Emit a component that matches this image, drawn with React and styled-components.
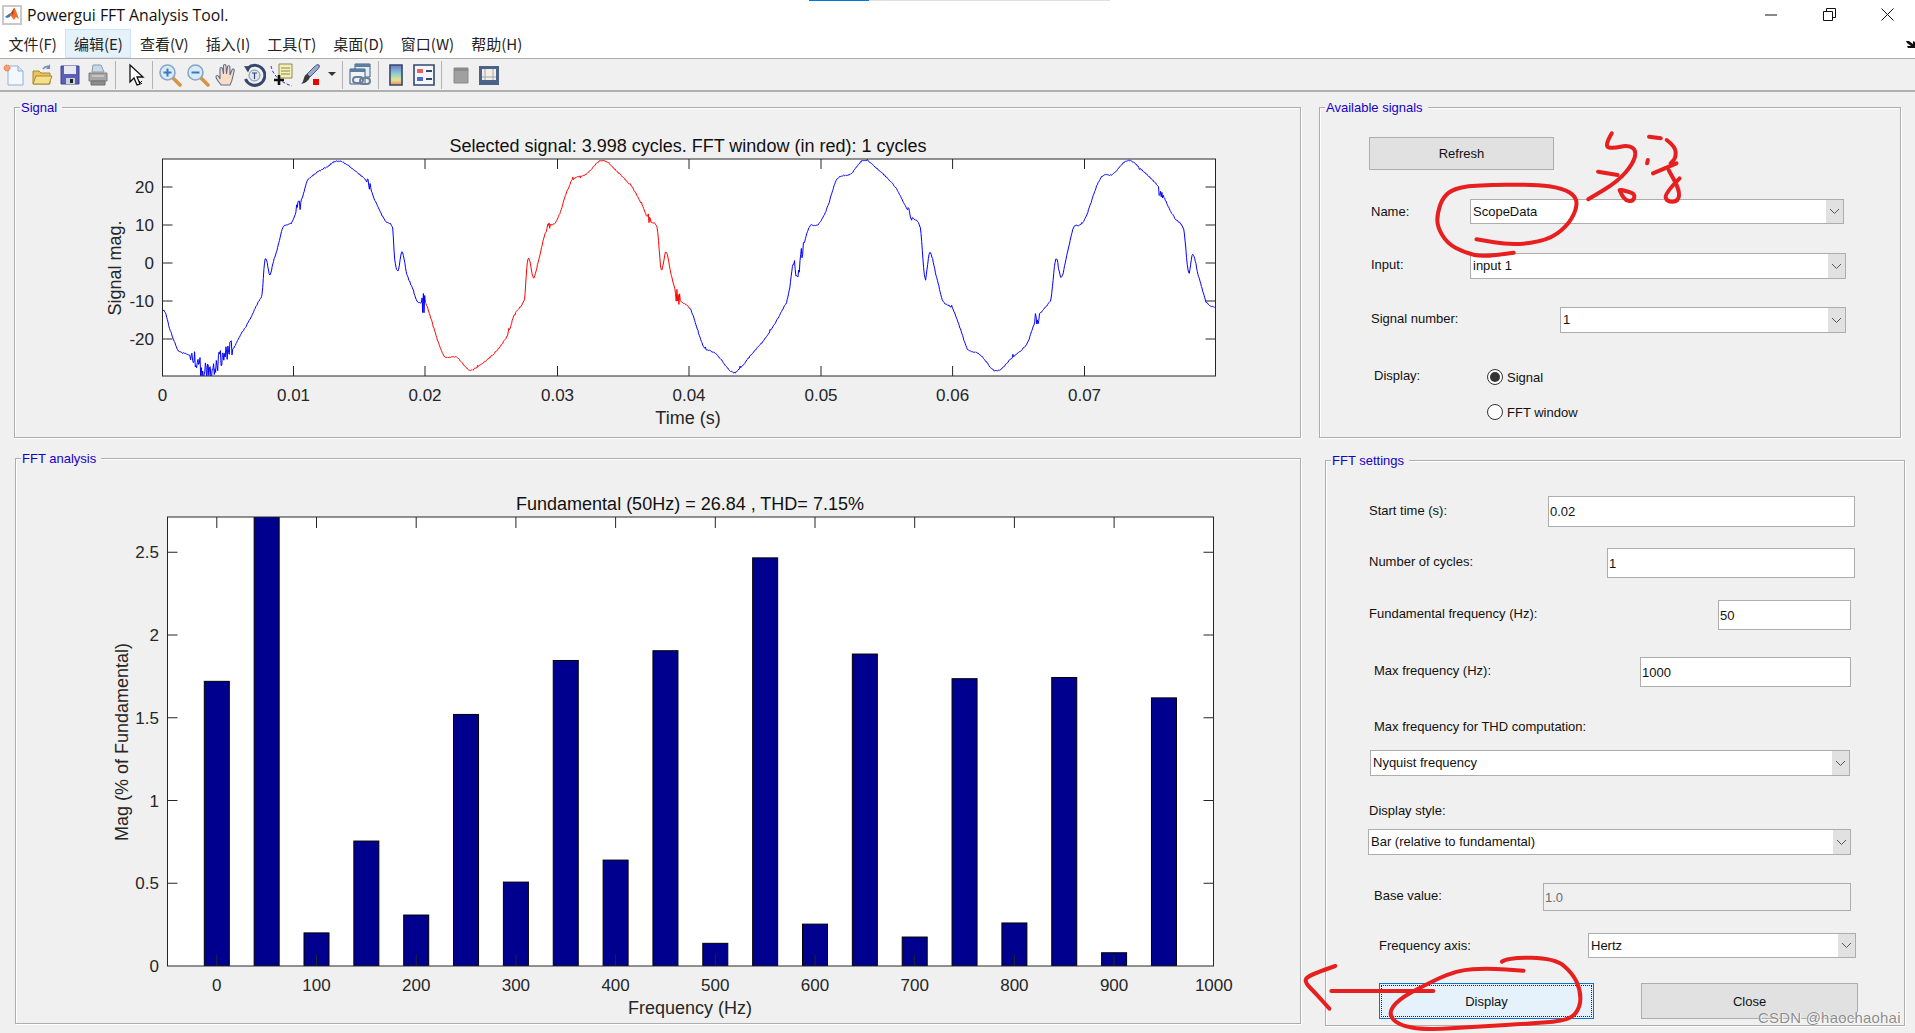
import React from "react";
import styled, { createGlobalStyle } from "styled-components";

const Global = createGlobalStyle`
  html, body { margin: 0; padding: 0; background: #f0f0f0; }
  * { box-sizing: border-box; }
`;
const UI = `"Liberation Sans", Arial, sans-serif`;

const Window = styled.div`
  position: relative; width: 1915px; height: 1033px; overflow: hidden;
  background: #f0f0f0; font-family: ${UI}; display: flex; flex-direction: column;
`;
const ProgressTrack = styled.div`
  position: absolute; left: 809px; top: 0; width: 301px; height: 1px; background: #e0e0e0;
`;
const ProgressFill = styled.div`
  width: 60px; height: 100%; background: #0078d7;
`;
const TitleBar = styled.div`
  height: 29px; background: #fff; display: flex; align-items: center; padding-left: 2px; flex: none;
`;
const TitleText = styled.div`
  margin-left: 5px; font: 15.8px "Open Sans", sans-serif; color: #111; flex: 1;
`;
const WinButton = styled.div`
  width: 58px; height: 27px; display: flex; align-items: center; justify-content: center;
  &:last-child { margin-right: -1px; }
`;
const MenuBar = styled.div`
  height: 30px; background: #fff; border-bottom: 1px solid #acacac; display: flex; flex: none;
  align-items: stretch;
`;
const MenuItem = styled.div`
  padding: 0 8.5px; display: flex; align-items: center; justify-content: center; white-space: nowrap;
  font: 15px "Noto Sans CJK SC", sans-serif; color: #222;
  flex: none; height: 29px;
  ${p => p.$active && `background: #e5f1fb; outline: 1px solid #cde4f7; outline-offset: -1px;`}
`;
const Corner = styled.div`
  margin-left: auto; align-self: center; display: flex; margin-right: -1px;
`;
const ToolBar = styled.div`
  height: 33px; background: #f0f0f0; border-bottom: 2px solid #b0b0b0; display: flex; flex: none;
  align-items: center;
`;
const Tool = styled.div`
  width: 28px; height: 28px; display: flex; align-items: center; justify-content: center; flex: none;
`;
const ToolSep = styled.div`
  width: 1px; height: 28px; background: #b4b4b4; flex: none;
  margin: 0 ${p => p.$r}px 0 ${p => p.$l}px;
`;
const CaretWrap = styled.div`
  margin-left: 4px; display: flex; flex: none;
`;
const Work = styled.div`
  display: flex; padding: 15px 0 0 14px; flex: 1; align-items: flex-start;
`;
const Column = styled.div`
  display: flex; flex-direction: column; flex: none;
  margin-left: ${p => p.$ml || 0}px; width: ${p => p.$w}px;
`;
const Panel = styled.div`
  position: relative; flex: none;
  width: ${p => p.$w}px; height: ${p => p.$h}px;
  margin-top: ${p => p.$mt || 0}px; margin-left: ${p => p.$ml || 0}px;
  border: 1px solid #adadad; box-shadow: inset 1px 1px 0 #fff, 1px 1px 0 #fff;
  padding: ${p => p.$pad || "0"};
`;
const Legend = styled.div`
  position: absolute; left: 5px; top: -8px; padding: 0 5px 0 1px; background: #f0f0f0; height: 16px;
  font-size: 13px; line-height: 15px; color: #1400c8; white-space: nowrap;
`;
const ChartSvg = styled.svg`
  display: block;
  text { font-family: ${UI}; fill: #262626; }
`;
const Row = styled.div`
  display: flex; align-items: center; margin-top: ${p => p.$mt || 0}px; height: ${p => p.$h}px;
`;
const Label = styled.div`
  width: ${p => p.$w}px; padding-left: ${p => p.$in || 0}px; padding-bottom: ${p => p.$pb ?? 3}px;
  font-size: 13px; color: #111; white-space: nowrap; flex: none;
`;
const PushButton = styled.div`
  width: ${p => p.$w}px; height: ${p => p.$h}px; margin-left: ${p => p.$ml || 0}px; flex: none;
  background: #e1e1e1; border: 1px solid #adadad; display: flex; align-items: center; justify-content: center;
  font-size: 13px; color: #111;
`;
const FocusButton = styled(PushButton)`
  background: #e5f1fb; border: 1px solid #0078d7; outline: 1px dotted #222; outline-offset: -3px;
`;
const SelectBox = styled.div`
  width: ${p => p.$w}px; height: 100%; flex: none; background: #fff; border: 1px solid #adadad;
  margin-left: ${p => p.$ml || 0}px;
  display: flex; align-items: stretch; font-size: 13px; color: #111;
`;
const SelectText = styled.div`
  flex: 1; padding-left: 2px; line-height: 24px; white-space: nowrap;
`;
const SelectArrow = styled.div`
  width: 17px; background: #e1e1e1; display: flex; align-items: center; justify-content: center;
`;
const TextBox = styled.div`
  width: ${p => p.$w}px; height: 100%; flex: none; border: 1px solid #adadad; padding-left: 1px;
  background: ${p => (p.$disabled ? "#f0f0f0" : "#fff")};
  color: ${p => (p.$disabled ? "#6d6d6d" : "#111")};
  font-size: 13px; display: flex; align-items: center;
`;
const Radio = styled.div`
  width: 16px; height: 16px; border-radius: 50%; border: 1px solid #333; background: #fff; flex: none;
  display: flex; align-items: center; justify-content: center;
  &::after { content: ""; width: 10px; height: 10px; border-radius: 50%; background: ${p => (p.$on ? "#333" : "transparent")}; }
`;
const RadioText = styled.div`
  margin-left: 4px; font-size: 13px; color: #111;
`;
const Watermark = styled.div`
  position: absolute; left: 1758px; top: 1009px; font-size: 15px; line-height: 17px;
  color: #8c8c8c; text-shadow: 0 0 1px #fff, 1px 0 0 #fff; white-space: nowrap; letter-spacing: 0.2px;
`;
const Ink = styled.svg`
  position: absolute; left: 0; top: 0; pointer-events: none;
`;

/* ------- data ------- */
const z4 = [[153,538],[160,545],[170,590],[182,630],[192,660],[210,668],[222,675],[240,700],[260,725],[285,700],[310,665],[325,655],[345,610],[365,570],[390,510],[397,490],[403,395],[408,388],[416,432],[425,390],[435,350],[448,288],[470,275],[485,230],[497,195],[507,150],[530,125],[560,105],[578,90],[600,97],[630,125],[655,155],[680,225],[700,270],[717,290],[722,385],[730,420],[740,362],[752,430],[765,470],[778,513],[797,515],[810,560],[825,620],[843,675],[875,680],[905,717],[945,690],[975,655],[1000,610],[1015,550],[1040,505],[1047,395],[1052,388],[1062,440],[1075,385],[1090,310],[1100,285],[1120,265],[1150,165],[1165,140],[1190,130],[1230,88],[1270,125],[1305,170],[1330,225],[1345,270],[1365,290],[1375,415],[1387,362],[1400,435],[1415,500],[1440,525],[1450,545],[1465,600],[1480,650],[1510,670]];
const z5 = [[78,722],[95,715],[130,665],[155,630],[185,575],[212,515],[220,470],[228,400],[240,430],[250,360],[268,288],[290,280],[310,235],[335,145],[370,128],[400,88],[430,110],[480,170],[515,250],[540,290],[551,440],[563,365],[580,440],[595,510],[620,535],[640,600],[655,655],[685,670],[725,720],[765,680],[800,640],[825,560],[860,505],[870,395],[875,388],[885,440],[900,365],[915,290],[940,270],[980,145],[1010,130],[1048,88],[1080,115],[1125,170],[1160,255],[1185,295],[1197,425],[1207,370],[1220,430],[1240,510],[1263,530]];
const knots = [
  ...z4.map(([x, y]) => [100 + x / 2.45, 130 + y / 3]),
  ...z5.map(([x, y]) => [700 + x / 2.45, 130 + y / 3]),
];
const noiseZones = [[190.6,232.6,10],[296,301,7],[367,371,7],[422,425,12],[508,510,6],[547,551,6],[647,651,8],[675.5,680,7],[794,804,10],[908,912,7],[1034.7,1038.8,8],[1159,1163,8]];
let seed = 12345;
const rnd = () => ((seed = (seed * 16807) % 2147483647) / 2147483647);
const catmull = (a, b, c, d, t) =>
  0.5 * (2 * b + (c - a) * t + (2 * a - 5 * b + 4 * c - d) * t * t + (3 * b - a - 3 * c + d) * t * t * t);
const wave = (() => {
  const pts = [];
  for (let i = 0; i < knots.length - 1; i++) {
    const p0 = knots[Math.max(0, i - 1)], p1 = knots[i], p2 = knots[i + 1], p3 = knots[Math.min(knots.length - 1, i + 2)];
    const n = Math.max(1, Math.ceil((p2[0] - p1[0]) / 0.7));
    for (let k = 0; k < n; k++) {
      const t = k / n;
      const x = p1[0] + (p2[0] - p1[0]) * t;
      let y = catmull(p0[1], p1[1], p2[1], p3[1], t) + (rnd() - 0.5) * 1.2;
      if (rnd() < 0.03) y += (rnd() - 0.5) * 5;
      const z = noiseZones.find(a => x >= a[0] && x <= a[1]);
      if (z) y += (rnd() - 0.5) * 2 * z[2];
      pts.push([x, y]);
    }
  }
  return pts;
})();
const toLine = pts => pts.map(p => `${p[0].toFixed(1)},${p[1].toFixed(1)}`).join(" ");
const RED0 = 425, RED1 = 689;
const waveA = toLine(wave.filter(p => p[0] <= RED0 + 0.5));
const waveR = toLine(wave.filter(p => p[0] >= RED0 && p[0] <= RED1 + 0.5));
const waveB = toLine(wave.filter(p => p[0] >= RED1));

const bars = [1.72,2.9,0.2,0.755,0.308,1.52,0.507,1.846,0.64,1.905,0.137,2.466,0.253,1.885,0.175,1.736,0.26,1.743,0.08,1.62];

/* ------- charts ------- */
function SignalChart() {
  const L = 162.5, R = 1215.5, T = 158, B = 375;
  const xt = [[162.5,"0"],[293.5,"0.01"],[425,"0.02"],[557.5,"0.03"],[689,"0.04"],[821,"0.05"],[952.6,"0.06"],[1084.5,"0.07"]];
  const yt = [[186,"20"],[224,"10"],[262,"0"],[300,"-10"],[338,"-20"]];
  return (
    <ChartSvg width="1285" height="329" viewBox="15 107 1285 329">
      <defs><clipPath id="sigclip"><rect x={L} y={T} width={R - L} height={B - T} /></clipPath></defs>
      <rect x={L} y={T} width={R - L} height={B - T} fill="#fff" />
      <g clipPath="url(#sigclip)" fill="none" strokeWidth="1">
        <polyline points={waveA} stroke="#0000ff" />
        <polyline points={waveR} stroke="#ff0000" />
        <polyline points={waveB} stroke="#0000ff" />
      </g>
      <rect x={L} y={T} width={R - L} height={B - T} fill="none" stroke="#262626" />
      {xt.slice(1).map(([x]) => <path key={x} d={`M${x} ${T}v10M${x} ${B}v-10`} stroke="#262626" fill="none" />)}
      {yt.map(([y]) => <path key={y} d={`M${L} ${y}h10M${R} ${y}h-10`} stroke="#262626" fill="none" />)}
      {xt.map(([x, s]) => <text key={s} x={x} y="400" fontSize="17" textAnchor="middle">{s}</text>)}
      {yt.map(([y, s]) => <text key={s} x="154" y={y + 6} fontSize="17" textAnchor="end">{s}</text>)}
      <text x="688" y="151" fontSize="18" textAnchor="middle" style={{ fill: "#111" }}>Selected signal: 3.998 cycles. FFT window (in red): 1 cycles</text>
      <text x="688" y="423" fontSize="18" textAnchor="middle">Time (s)</text>
      <text transform="translate(121 267) rotate(-90)" fontSize="18" textAnchor="middle">Signal mag.</text>
    </ChartSvg>
  );
}
function FftChart() {
  const L = 167.5, R = 1213.5, T = 516, B = 965;
  const fx = f => 216.8 + f * 0.997;
  const vy = v => 965 - v * 165.5;
  const ys = [[0,"0"],[0.5,"0.5"],[1,"1"],[1.5,"1.5"],[2,"2"],[2.5,"2.5"]];
  const xs = [0,100,200,300,400,500,600,700,800,900,1000];
  return (
    <ChartSvg width="1285" height="564" viewBox="16 458 1285 564">
      <defs><clipPath id="fftclip"><rect x={L} y={T} width={R - L} height={B - T} /></clipPath></defs>
      <rect x={L} y={T} width={R - L} height={B - T} fill="#fff" />
      <g clipPath="url(#fftclip)">
        {bars.map((v, i) => (
          <rect key={i} x={fx(i * 50) - 12.5} y={vy(v)} width="25" height={B - vy(v)} fill="#00008f" stroke="#000" strokeWidth="1" />
        ))}
      </g>
      <rect x={L} y={T} width={R - L} height={B - T} fill="none" stroke="#262626" />
      {xs.slice(0, -1).map(f => <path key={f} d={`M${fx(f)} ${T}v11M${fx(f)} ${B}v-11`} stroke="#262626" fill="none" />)}
      {ys.slice(1).map(([v]) => <path key={v} d={`M${L} ${vy(v)}h10M${R} ${vy(v)}h-10`} stroke="#262626" fill="none" />)}
      {xs.map(f => <text key={f} x={fx(f)} y="990" fontSize="17" textAnchor="middle">{f}</text>)}
      {ys.map(([v, s]) => <text key={s} x="159" y={vy(v) + 6} fontSize="17" textAnchor="end">{s}</text>)}
      <text x="690" y="509" fontSize="18" textAnchor="middle" style={{ fill: "#111" }}>Fundamental (50Hz) = 26.84 , THD= 7.15%</text>
      <text x="690" y="1013" fontSize="18" textAnchor="middle">Frequency (Hz)</text>
      <text transform="translate(128 741) rotate(-90)" fontSize="18" textAnchor="middle">Mag (% of Fundamental)</text>
    </ChartSvg>
  );
}

/* ------- toolbar icons ------- */
const I = ({ children }) => <svg width="24" height="24" viewBox="0 0 24 24">{children}</svg>;
const NewIcon = () => <I><path d="M6 3h10l5 5v14H6z" fill="#f4f8fe" stroke="#8fb0d8" /><path d="M16 3v5h5" fill="#d6e4f5" stroke="#8fb0d8" /><circle cx="5" cy="5" r="3" fill="#f4a070" stroke="#e07040" strokeDasharray="1.5 1" /></I>;
const OpenIcon = () => <I><path d="M3 8h6l2 2h9v11H3z" fill="#e8c45a" stroke="#a88a30" /><path d="M3 21l3-8h16l-3 8z" fill="#f6e08c" stroke="#a88a30" /><path d="M13 6q3-4 7-2" fill="none" stroke="#6f8fb8" strokeWidth="1.6" /><path d="M20 1v5h-4z" fill="#6f8fb8" /></I>;
const SaveIcon = () => <I><path d="M3 3h18v18H3z" fill="#5a5fb5" stroke="#3f4390" /><path d="M6 3h12v8H6z" fill="#e8e8f4" /><path d="M8 15h9v6H8z" fill="#cfd0de" /><path d="M12 16h3v4h-3z" fill="#222" /></I>;
const PrintIcon = () => <I><path d="M7 2h8l3 7H6z" fill="#c6dbea" stroke="#8c9aa3" /><path d="M3 10h18v8H3z" fill="#a6a6a6" stroke="#7c7c7c" /><path d="M5 18h14v4H5z" fill="#8c8c8c" stroke="#707070" /><path d="M6 13h12" stroke="#e2e2e2" /></I>;
const PointerIcon = () => <I><path d="M6 2v17l4-4 3 7 3-1-3-7h6z" fill="#fff" stroke="#111" strokeWidth="1.3" /><path d="M15 18l3 3m0-3l-3 3" stroke="#111" /></I>;
const ZoomIcon = ({ plus }) => <I><path d="M14 14l8 8" stroke="#d99440" strokeWidth="3.6" strokeLinecap="round" /><circle cx="9.5" cy="9.5" r="7.5" fill="#d7ebf8" stroke="#88a6c4" strokeWidth="1.6" /><path d={plus ? "M5.5 9.5h8M9.5 5.5v8" : "M5.5 9.5h8"} stroke="#3d78b8" strokeWidth="2" /></I>;
const HandIcon = () => <I><path d="M7 22c-2-3-5-6-5-8s2-2 3 0l1 2V6c0-2 2-2 2.5 0l1 5V3c0-2 2.5-2 2.5 0l.5 8 1-7c.3-2 2.6-1.6 2.4.4L16 12l2-5c.7-1.6 2.6-1 2.2.7L18.5 15c-.5 3-1.5 5-2.5 7z" fill="#fbdcc4" stroke="#5d6f95" strokeWidth="1.1" /></I>;
const RotateIcon = () => <I><path d="M6 5A10 10 0 1 1 3.5 16" fill="none" stroke="#34476e" strokeWidth="3" /><path d="M2 3l7 .5-3 6z" fill="#34476e" /><circle cx="12.5" cy="12.5" r="5.5" fill="#dfe6ee" stroke="#7a8aa5" /><path d="M10 10h5M12.5 10v6" stroke="#34476e" strokeWidth="1.2" /></I>;
const CursorIcon = () => <I><path d="M9 1h13v14H9z" fill="#f5efb8" stroke="#8c8a50" /><path d="M11 5h9M11 8h9M11 11h9" stroke="#8c8a50" /><path d="M1 3q3 14 21 20" fill="none" stroke="#2222dd" strokeDasharray="3 2" /><path d="M9 12v10M4 17h10" stroke="#111" strokeWidth="2.6" /></I>;
const BrushIcon = () => <I><path d="M21 2c1 1 0 3-2 5l-7 7-3-3 7-7c2-2 4-3 5-2z" fill="#9aa9cf" stroke="#4a5a88" /><path d="M9 11l3 3c-1 3-4 6-9 7 2-2 2-3 3-6 .5-2 1.500-3.500 3-4z" fill="#3a3a3a" /><path d="M15 16h6v6h-6z" fill="#ee0000" /></I>;
const LinkIcon = () => <I><path d="M7 1h15v13H7z" fill="#e4ecf4" stroke="#3f5c80" /><path d="M7 1h15v3H7z" fill="#5c7ca0" /><path d="M2 6h15v15H2z" fill="#eef3f8" stroke="#3f5c80" /><path d="M2 6h15v3H2z" fill="#5c7ca0" /><rect x="5" y="14" width="10" height="6" rx="3" fill="none" stroke="#6a7f9a" strokeWidth="2" /><rect x="12" y="15" width="10" height="6" rx="3" fill="none" stroke="#6a7f9a" strokeWidth="2" /></I>;
const ColorbarIcon = () => <I><defs><linearGradient id="cb" x1="0" y1="0" x2="0" y2="1"><stop offset="0" stopColor="#6a78c8" /><stop offset="0.45" stopColor="#8fd0d0" /><stop offset="0.75" stopColor="#ecdf90" /><stop offset="1" stopColor="#e88a60" /></linearGradient></defs><path d="M6 2h12v20H6z" fill="url(#cb)" stroke="#34476e" strokeWidth="1.6" /></I>;
const LegendIcon = () => <I><path d="M2 2h20v20H2z" fill="#f4f6fa" stroke="#34476e" strokeWidth="1.6" /><path d="M5 6h6v4H5z" fill="#e86060" /><path d="M5 14h6v4H5z" fill="#5068d0" /><path d="M14 8h6M14 16h6" stroke="#34476e" strokeWidth="1.8" /></I>;
const HideIcon = () => <I><path d="M5 5h14v15H5z" fill="#a0a0a0" stroke="#8a8a8a" /><path d="M5 5h14v3H5z" fill="#8a8a8a" /></I>;
const PlotIcon = () => <I><path d="M2 3h20v19H2z" fill="#4c6288" /><path d="M5 6h14v11H5z" fill="#f4efe0" /><path d="M8 6v11M16 6v11M5 14h14" stroke="#9aa6ba" /></I>;
const Caret = () => <svg width="8" height="5" viewBox="0 0 8 5"><path d="M0 0h8L4 4z" fill="#333" /></svg>;
const Chevron = () => <svg width="11" height="7" viewBox="0 0 11 7"><path d="M1 1l4.500 4.500L10 1" fill="none" stroke="#555" /></svg>;

/* ------- hand-drawn annotation ------- */
const smooth = pts => {
  if (pts.length < 3) return `M${pts[0][0]} ${pts[0][1]}L${pts[1][0]} ${pts[1][1]}`;
  let d = `M${pts[0][0].toFixed(1)} ${pts[0][1].toFixed(1)}`;
  for (let i = 1; i < pts.length - 1; i++) {
    const mx = (pts[i][0] + pts[i + 1][0]) / 2, my = (pts[i][1] + pts[i + 1][1]) / 2;
    d += `Q${pts[i][0].toFixed(1)} ${pts[i][1].toFixed(1)} ${mx.toFixed(1)} ${my.toFixed(1)}`;
  }
  const l = pts[pts.length - 1];
  return d + `L${l[0].toFixed(1)} ${l[1].toFixed(1)}`;
};
const top = a => a.map(([x, y]) => [1300 + x / 2.55, y / 3]);
const low = a => a.map(([x, y]) => [1300 + x / 2.55, 850 + y / 3]);
const inkStrokes = [
  top([[545,758],[470,772],[420,758],[375,730],[350,680],[350,640],[365,590],[395,565],[450,555],[600,553],[670,565],[705,590],[705,630],[680,680],[630,722],[540,736],[450,718]]),
  top([[795,400],[775,440],[800,445],[835,435],[858,450],[850,490],[810,545],[735,598]]),
  top([[760,515],[810,525]]),
  top([[815,570],[825,600],[850,605],[855,580],[820,570]]),
  top([[890,410],[920,415]]),
  top([[935,420],[958,440],[958,475],[945,490]]),
  top([[885,490],[887,480]]),
  top([[900,520],[960,490]]),
  top([[968,535],[930,580],[935,605],[965,605],[968,570],[940,510]]),
  low([[515,335],[530,322],[650,325],[695,370],[715,420],[715,470],[690,510],[600,520],[450,530],[320,540],[250,525],[225,490],[250,450],[310,410],[400,360],[480,355],[570,362]]),
  low([[90,348],[30,372],[8,392],[40,430],[75,476]]),
  low([[80,423],[340,423]]),
];

export default function App() {
  return (
    <Window>
      <Global />
      <TitleBar>
        <svg width="20" height="20" viewBox="0 0 20 20">
          <path d="M0 0h20v20H0z" fill="#c9c9c9" /><path d="M2 2h16v16H2z" fill="#fff" />
          <path d="M3 12l4-3 2-1 3-5c1-1 2 3 5 11l-3-2-2 3-3-4z" fill="#e8702a" />
          <path d="M3 12l4-3 2-1-1 4-3 1z" fill="#3d7fb8" />
          <path d="M9 8l3-5-1 7z" fill="#c83018" />
        </svg>
        <TitleText>Powergui FFT Analysis Tool.</TitleText>
        <WinButton><svg width="12" height="2" viewBox="0 0 12 2"><path d="M0 1h12" stroke="#111" /></svg></WinButton>
        <WinButton><svg width="13" height="13" viewBox="0 0 13 13"><path d="M.5 3.500h9v9h-9zM3.500 3.500v-3h9v9h-3" fill="none" stroke="#111" /></svg></WinButton>
        <WinButton><svg width="13" height="13" viewBox="0 0 13 13"><path d="M.5.5l12 12M12.500.5l-12 12" stroke="#111" fill="none" /></svg></WinButton>
      </TitleBar>
      <MenuBar>
        <MenuItem>文件(F)</MenuItem>
        <MenuItem $active>编辑(E)</MenuItem>
        <MenuItem>查看(V)</MenuItem>
        <MenuItem>插入(I)</MenuItem>
        <MenuItem>工具(T)</MenuItem>
        <MenuItem>桌面(D)</MenuItem>
        <MenuItem>窗口(W)</MenuItem>
        <MenuItem>帮助(H)</MenuItem>
        <Corner>
          <svg width="10" height="8" viewBox="0 0 10 8"><path d="M0 1h3l4 3V1l2 1v6H2L1 6h4L1 3z" fill="#111" /></svg>
        </Corner>
      </MenuBar>
      <ToolBar>
        <Tool><NewIcon /></Tool>
        <Tool><OpenIcon /></Tool>
        <Tool><SaveIcon /></Tool>
        <Tool><PrintIcon /></Tool>
        <ToolSep $l={3} $r={6} />
        <Tool><PointerIcon /></Tool>
        <ToolSep $l={2} $r={3} />
        <Tool><ZoomIcon plus /></Tool>
        <Tool><ZoomIcon /></Tool>
        <Tool><HandIcon /></Tool>
        <Tool><RotateIcon /></Tool>
        <Tool><CursorIcon /></Tool>
        <Tool><BrushIcon /></Tool>
        <CaretWrap><Caret /></CaretWrap>
        <ToolSep $l={6} $r={3} />
        <Tool><LinkIcon /></Tool>
        <ToolSep $l={4} $r={3} />
        <Tool><ColorbarIcon /></Tool>
        <Tool><LegendIcon /></Tool>
        <ToolSep $l={3} $r={5} />
        <Tool><HideIcon /></Tool>
        <Tool><PlotIcon /></Tool>
      </ToolBar>
      <Work>
        <Column $w={1287}>
          <Panel $w={1287} $h={331}>
            <Legend>Signal</Legend>
            <SignalChart />
          </Panel>
          <Panel $w={1286} $h={566} $mt={20} $ml={1}>
            <Legend>FFT analysis</Legend>
            <FftChart />
          </Panel>
        </Column>
        <Column $w={586} $ml={18}>
          <Panel $w={582} $h={331} $pad="29px 0 0 49px">
            <Legend>Available signals</Legend>
            <Row $h={33}><PushButton $w={185} $h={33}>Refresh</PushButton></Row>
            <Row $h={25} $mt={29}>
              <Label $w={101} $in={2} $pb={1}>Name:</Label>
              <SelectBox $w={374}><SelectText>ScopeData</SelectText><SelectArrow><Chevron /></SelectArrow></SelectBox>
            </Row>
            <Row $h={26} $mt={29}>
              <Label $w={101} $in={2}>Input:</Label>
              <SelectBox $w={376}><SelectText>input 1</SelectText><SelectArrow><Chevron /></SelectArrow></SelectBox>
            </Row>
            <Row $h={26} $mt={28}>
              <Label $w={191} $in={2}>Signal number:</Label>
              <SelectBox $w={286}><SelectText>1</SelectText><SelectArrow><Chevron /></SelectArrow></SelectBox>
            </Row>
            <Row $h={20} $mt={34}>
              <Label $w={118} $in={5}>Display:</Label>
              <Radio $on /><RadioText>Signal</RadioText>
            </Row>
            <Row $h={20} $mt={15}>
              <Label $w={118} />
              <Radio /><RadioText>FFT window</RadioText>
            </Row>
          </Panel>
          <Panel $w={580} $h={566} $mt={22} $ml={6} $pad="35px 0 0 42px">
            <Legend>FFT settings</Legend>
            <Row $h={31}>
              <Label $w={180} $in={1}>Start time (s):</Label>
              <TextBox $w={307}>0.02</TextBox>
            </Row>
            <Row $h={30} $mt={21}>
              <Label $w={239} $in={1}>Number of cycles:</Label>
              <TextBox $w={248}>1</TextBox>
            </Row>
            <Row $h={30} $mt={22}>
              <Label $w={350} $in={1}>Fundamental frequency (Hz):</Label>
              <TextBox $w={133}>50</TextBox>
            </Row>
            <Row $h={30} $mt={27}>
              <Label $w={272} $in={6}>Max frequency (Hz):</Label>
              <TextBox $w={211}>1000</TextBox>
            </Row>
            <Row $h={16} $mt={31}>
              <Label $in={6} $pb={0}>Max frequency for THD computation:</Label>
            </Row>
            <Row $h={26} $mt={16}>
              <SelectBox $w={480} $ml={2}><SelectText>Nyquist frequency</SelectText><SelectArrow><Chevron /></SelectArrow></SelectBox>
            </Row>
            <Row $h={16} $mt={26}>
              <Label $in={1} $pb={0}>Display style:</Label>
            </Row>
            <Row $h={26} $mt={11}>
              <SelectBox $w={483}><SelectText>Bar (relative to fundamental)</SelectText><SelectArrow><Chevron /></SelectArrow></SelectBox>
            </Row>
            <Row $h={28} $mt={28}>
              <Label $w={175} $in={6}>Base value:</Label>
              <TextBox $w={308} $disabled>1.0</TextBox>
            </Row>
            <Row $h={25} $mt={22}>
              <Label $w={220} $in={11} $pb={0}>Frequency axis:</Label>
              <SelectBox $w={268}><SelectText>Hertz</SelectText><SelectArrow><Chevron /></SelectArrow></SelectBox>
            </Row>
            <Row $h={36} $mt={25}>
              <FocusButton $w={215} $h={36} $ml={11}>Display</FocusButton>
              <PushButton $w={217} $h={36} $ml={47}>Close</PushButton>
            </Row>
          </Panel>
        </Column>
      </Work>
      <ProgressTrack><ProgressFill /></ProgressTrack>
      <Ink width="1915" height="1033" viewBox="0 0 1915 1033">
        <g fill="none" stroke="#e81f1f" strokeWidth="4" strokeLinecap="round" strokeLinejoin="round">
          {inkStrokes.map((s, i) => <path key={i} d={smooth(s)} />)}
        </g>
      </Ink>
      <Watermark>CSDN @haochaohai</Watermark>
    </Window>
  );
}
